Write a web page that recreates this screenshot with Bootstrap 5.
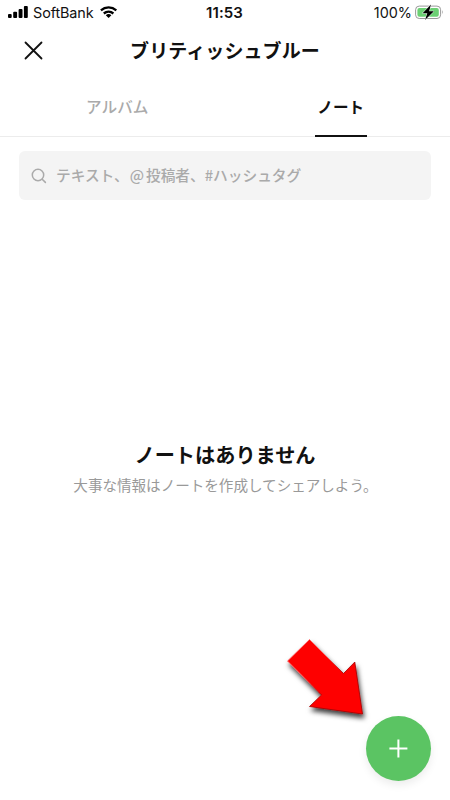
<!DOCTYPE html>
<html lang="ja">
<head>
<meta charset="utf-8">
<meta name="viewport" content="width=device-width, initial-scale=1">
<title>ノート</title>
<link rel="stylesheet" href="https://cdn.jsdelivr.net/npm/bootstrap@5.3.0/dist/css/bootstrap.min.css">
<style>
body { font-family: "Noto Sans CJK JP", sans-serif; color: #111; }
.screen { width: 450px; height: 800px; }
.status-bar { height: 25px; font: 14.4px/25px Inter, sans-serif; padding: 0 6px 0 8px; color: #111; }
.status-bar .side { flex: 1 1 0; }
.carrier { margin-left: 5px; letter-spacing: -.1px; }
.wifi { margin-left: 6px; }
.battery { margin-left: 3px; }
.clock { font-weight: 600; font-size: 15px; letter-spacing: .1px; margin-left: -3px; }
.title-bar { height: 52px; padding-bottom: 2px; }
.title-bar .side { width: 64px; padding-left: 24px; }
.title-bar h1 { font-size: 19px; letter-spacing: .1px; }
.tabs { height: 60px; border-bottom: 1px solid #ececec; padding-left: 9px; }
.tabs .nav-link { height: 60px; font-size: 15.6px; line-height: 58px; color: #aaa; }
.tabs .nav-link.active { color: #111; padding-left: 2px !important; }
.tabs .label { display: inline-block; height: 60px; letter-spacing: .1px; }
.tabs .first { padding-right: 4px !important; }
.tabs .active .label { width: 52px; border-bottom: 2px solid #111; }
.search { height: 49px; margin: 14px 19px 0; padding-left: 12px; background: #f4f4f4; border-radius: 6px; font-size: 14.7px; color: #aaa; }
.hint { margin: 0 0 1px 9px; font-weight: 500; }
.at { margin: 0 2px 0 1px; }
.empty { margin-top: 240px; }
.empty h2 { font-size: 20.2px; line-height: 30px; }
.empty p { font-size: 14.6px; line-height: 30px; color: #999; letter-spacing: -.04px; padding-left: 1px; }
.add { right: 19px; bottom: 19px; width: 65px; height: 65px; background: #5bc463; box-shadow: 0 4px 9px rgba(0,0,0,.08); }
.pointer { left: 275px; top: 625px; }
</style>
</head>
<body class="bg-white">
<div class="screen position-relative overflow-hidden d-flex flex-column">
  <div class="status-bar d-flex align-items-center">
    <div class="side d-flex align-items-center">
      <svg width="20" height="14" viewBox="0 0 20 14" fill="#000"><rect y="8" width="3.7" height="4" rx="1"/><rect x="5.2" y="5.7" width="3.9" height="6.3" rx="1"/><rect x="10.6" y="3" width="3.9" height="9" rx="1"/><rect x="15.9" y="0" width="3.9" height="12" rx="1"/></svg>
      <span class="carrier">SoftBank</span>
      <svg class="wifi" width="20" height="14" viewBox="0 0 20 14" fill="none" stroke="#000" stroke-width="2.3"><path d="M.9 4.3a11.8 11.8 0 0 1 15.4 0M3.8 7.5a7.5 7.5 0 0 1 9.6 0"/><path d="M8.6 12 5.8 9.2a4.2 4.2 0 0 1 5.6 0z" fill="#000" stroke="none"/></svg>
    </div>
    <span class="clock">11:53</span>
    <div class="side d-flex align-items-center justify-content-end">
      <span class="percent">100%</span>
      <svg class="battery" width="29" height="18" viewBox="0 0 29 18"><g transform="translate(0 -.7)"><rect x=".6" y="2.8" width="25" height="12.4" rx="3.6" fill="#fff" stroke="#999"/><rect x="2.4" y="4.6" width="21.4" height="8.8" rx="2" fill="#6bd073"/><path d="M27 6.6q1.7 2.2 0 4.4z" fill="#999"/><path d="M16 1.2 7.6 9.9h4.7L10 16.8 18.9 8h-4.8z" fill="#000" stroke="#fff" stroke-width="1" paint-order="stroke"/></g></svg>
    </div>
  </div>
  <header class="title-bar d-flex align-items-center">
    <div class="side d-flex"><svg width="19" height="19" viewBox="0 0 19 19" stroke="#111" stroke-width="1.8" stroke-linecap="round"><path d="m1.5 1.5 16 16M17.5 1.5l-16 16"/></svg></div>
    <h1 class="flex-fill text-center fw-bold mb-0">ブリティッシュブルー</h1>
    <div class="side"></div>
  </header>
  <nav class="tabs nav nav-fill flex-nowrap">
    <a class="first nav-link nav-item w-50 p-0" href="#"><span class="label fw-medium">アルバム</span></a>
    <a class="nav-link nav-item w-50 p-0 active fw-bold" href="#"><span class="label">ノート</span></a>
  </nav>
  <div class="search d-flex align-items-center">
    <svg width="16" height="16" viewBox="0 0 16 16" fill="none" stroke="#aaa" stroke-width="1.5" stroke-linecap="round"><circle cx="7" cy="7" r="5.7"/><path d="m11.2 11.2 3.2 3.2"/></svg>
    <span class="hint">テキスト、<span class="at">@</span>投稿者、#ハッシュタグ</span>
  </div>
  <main class="empty text-center">
    <h2 class="fw-bold mb-0">ノートはありません</h2>
    <p class="mb-0">大事な情報はノートを作成してシェアしよう。</p>
  </main>
  <svg class="pointer position-absolute" width="110" height="105" viewBox="275 625 110 105">
    <defs>
      <filter id="shade" x="-20%" y="-20%" width="150%" height="150%"><feDropShadow dx="1.5" dy="4" stdDeviation="2.4" flood-color="#000" flood-opacity=".75"/></filter>
      <linearGradient id="edge" x1="0" y1="0" x2="1" y2="1"><stop offset=".35" stop-color="#ff6a6a"/><stop offset=".6" stop-color="#a00000"/></linearGradient>
    </defs>
    <path d="M309.5 639.5 343.5 673.5 354.8 662 362.5 714 309.5 706.5 321.5 695 287.5 661z" fill="#fe0000" stroke="url(#edge)" stroke-width=".8" filter="url(#shade)"/>
  </svg>
  <button class="add btn rounded-circle border-0 p-0 position-absolute d-flex align-items-center justify-content-center" aria-label="追加"><svg width="19" height="19" viewBox="0 0 19 19" stroke="#fff" stroke-width="2"><path d="M9.4 .4v18M.4 9.4h18"/></svg></button>
</div>
<script src="https://cdn.jsdelivr.net/npm/bootstrap@5.3.0/dist/js/bootstrap.bundle.min.js"></script>
</body>
</html>
